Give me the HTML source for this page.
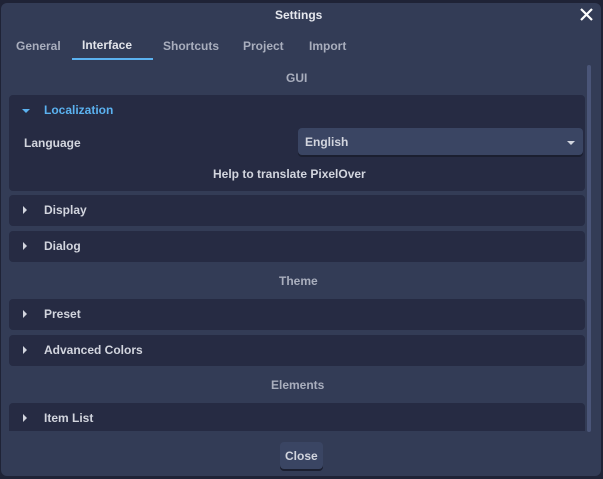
<!DOCTYPE html>
<html><head><style>
*{margin:0;padding:0;box-sizing:border-box}
body{width:603px;height:479px;background:#1f2336;position:relative;overflow:hidden;font-family:"Liberation Sans",sans-serif;font-weight:bold;font-size:12px;color:#d2d5de}
.win{position:absolute;left:1px;top:3px;width:600px;height:473px;background:#333c56;border-radius:6px}
.a{position:absolute;white-space:nowrap}
.p{position:absolute;left:9px;width:576px;background:#262b43;border-radius:4px}
.tri{position:absolute;left:23px;width:0;height:0;border-top:4px solid transparent;border-bottom:4px solid transparent;border-left:4px solid #d2d5de}
.h{color:#a9aebd}
</style></head><body>
<div class="win"></div>
<div class="a" style="left:275px;top:8px;color:#e6e8ee">Settings</div>
<svg class="a" style="left:580px;top:8px" width="13" height="13"><path d="M1 1L12 12M12 1L1 12" stroke="#fff" stroke-width="2.2"/></svg>
<div class="a h" style="left:16px;top:39px">General</div>
<div class="a" style="left:82px;top:38px;color:#e2e4ea">Interface</div>
<div style="position:absolute;left:72px;top:58px;width:81px;height:2px;background:#5bb2f0"></div>
<div class="a h" style="left:163px;top:39px">Shortcuts</div>
<div class="a h" style="left:243px;top:39px">Project</div>
<div class="a h" style="left:309px;top:39px">Import</div>
<div class="a h" style="left:286px;top:71px">GUI</div>
<div style="position:absolute;left:587px;top:65px;width:4px;height:367px;background:#4a5578;border-radius:2px"></div>
<div class="p" style="top:95px;height:96px"></div>
<div style="position:absolute;left:22px;top:109px;border-left:4px solid transparent;border-right:4px solid transparent;border-top:4px solid #5bb2f0"></div>
<div class="a" style="left:44px;top:103px;color:#5bb2f0">Localization</div>
<div class="a" style="left:24px;top:136px">Language</div>
<div style="position:absolute;left:298px;top:128px;width:285px;height:27px;background:#3a4563;border-radius:4px;box-shadow:0 2px 0 #1b1f30"></div>
<div class="a" style="left:305px;top:135px">English</div>
<div style="position:absolute;left:567px;top:141px;border-left:4px solid transparent;border-right:4px solid transparent;border-top:4px solid #d2d5de"></div>
<div class="a" style="left:213px;top:167px">Help to translate PixelOver</div>
<div class="p" style="top:195px;height:31px"></div><div class="tri" style="top:206px"></div><div class="a" style="left:44px;top:203px">Display</div>
<div class="p" style="top:231px;height:31px"></div><div class="tri" style="top:242px"></div><div class="a" style="left:44px;top:239px">Dialog</div>
<div class="a h" style="left:279px;top:274px">Theme</div>
<div class="p" style="top:299px;height:31px"></div><div class="tri" style="top:310px"></div><div class="a" style="left:44px;top:307px">Preset</div>
<div class="p" style="top:335px;height:31px"></div><div class="tri" style="top:346px"></div><div class="a" style="left:44px;top:343px">Advanced Colors</div>
<div class="a h" style="left:271px;top:378px">Elements</div>
<div class="p" style="top:403px;height:28px;border-radius:4px 4px 0 0"></div><div class="tri" style="top:414px"></div><div class="a" style="left:44px;top:411px">Item List</div>
<div style="position:absolute;left:280px;top:442px;width:43px;height:27px;background:#3a4563;border-radius:4px;box-shadow:0 2px 0 #1b1f30"></div>
<div class="a" style="left:285px;top:449px">Close</div>
</body></html>
